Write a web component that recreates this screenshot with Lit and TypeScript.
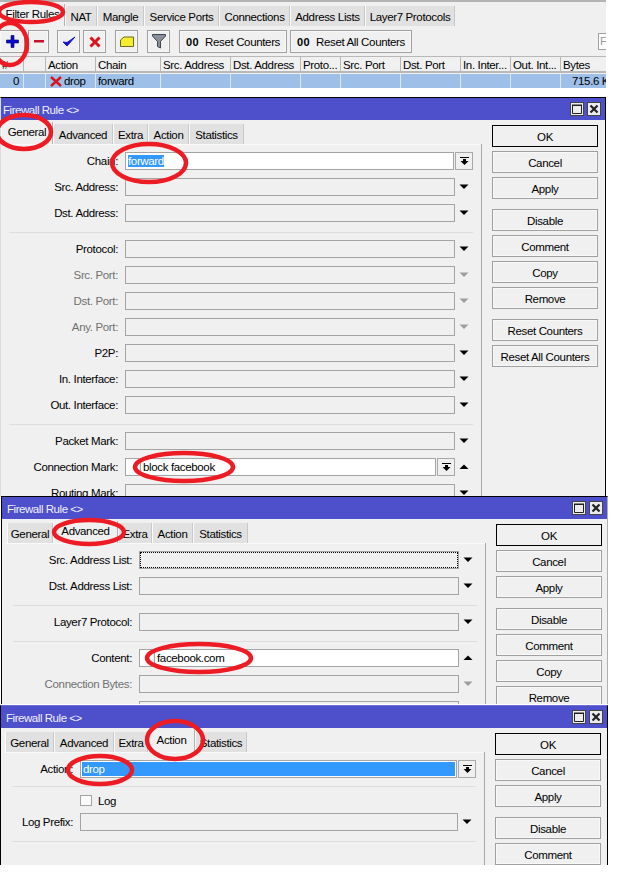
import { LitElement, html, css, svg, nothing } from "lit";
import { customElement } from "lit/decorators.js";

type Row =
  | { sep: true; cls?: string }
  | {
      sep?: false;
      label: string;
      kind?: "white" | "blue" | "plain" | "focus";
      value?: string;
      select?: boolean;
      invert?: boolean;
      drop?: boolean;
      arrow?: "down" | "up" | "dim" | "none";
      dim?: boolean;
    };

const Arrow = (kind: string) =>
  kind === "none"
    ? nothing
    : html`<span class="slot"><svg width="10" height="6" viewBox="0 0 10 6"><path d=${kind === "up" ? "M5 0.5 L9.5 5 H0.5 Z" : "M0.5 0.5 H9.5 L5 5 Z"} fill=${kind === "dim" ? "#9aa09a" : "#000"}/></svg></span>`;

const DropBtn = html`<span class="dropbtn"><svg width="9" height="9" viewBox="0 0 9 9"><path d="M0 0H9V1H0Z M3 2H6V4H8.5L4.5 8L0.5 4H3Z" fill="#000"/></svg></span>`;

const tabsTop = [
  ["Filter Rules", 65], ["NAT", 32], ["Mangle", 47], ["Service Ports", 75],
  ["Connections", 71], ["Address Lists", 75], ["Layer7 Protocols", 90],
] as [string, number][];

const columns = [23, 22, 50, 65, 70, 70, 40, 60, 60, 50, 50, 46];
const heads = ["#", "", "Action", "Chain", "Src. Address", "Dst. Address", "Proto...", "Src. Port", "Dst. Port", "In. Inter...", "Out. Int...", "Bytes"];

const generalRows: Row[] = [
  { label: "Chain:", kind: "white", value: "forward", select: true, drop: true, arrow: "none" },
  { label: "Src. Address:" }, { label: "Dst. Address:" }, { sep: true },
  { label: "Protocol:" },
  { label: "Src. Port:", dim: true, arrow: "dim" },
  { label: "Dst. Port:", dim: true, arrow: "dim" },
  { label: "Any. Port:", dim: true, arrow: "dim" },
  { label: "P2P:" }, { label: "In. Interface:" }, { label: "Out. Interface:" }, { sep: true },
  { label: "Packet Mark:" },
  { label: "Connection Mark:", kind: "white", value: "block facebook", invert: true, drop: true, arrow: "up" },
  { label: "Routing Mark:" },
];
const advancedRows: Row[] = [
  { label: "Src. Address List:", kind: "focus" }, { label: "Dst. Address List:" }, { sep: true },
  { label: "Layer7 Protocol:" }, { sep: true },
  { label: "Content:", kind: "white", value: "facebook.com", invert: true, arrow: "up" },
  { label: "Connection Bytes:", dim: true, arrow: "dim" },
  { label: "", dim: true, arrow: "dim" },
];

const buttonsFull = [["OK", "Cancel", "Apply"], ["Disable", "Comment", "Copy", "Remove"], ["Reset Counters", "Reset All Counters"]];
const buttonsMid = [["OK", "Cancel", "Apply"], ["Disable", "Comment", "Copy", "Remove"]];
const buttonsShort = [["OK", "Cancel", "Apply"], ["Disable", "Comment"]];

@customElement("app-root")
export class AppRoot extends LitElement {
  static styles = css`
    :host { display: block; position: relative; width: 624px; height: 884px; background: #fff; overflow: hidden;
      font: 11.5px "Liberation Sans", Arial, sans-serif; letter-spacing: -0.35px; color: #000; }
    * { box-sizing: border-box; }
    .top { width: 606px; height: 88px; background: #f0f0f0; border-top: 2px solid #b4b4b4; overflow: hidden; }
    .toptabs { display: flex; height: 20px; margin-top: 4px; }
    .tab { height: 20px; padding-top: 1px; background: #e1e1e1; border-left: 1px solid #fafafa; border-right: 1px solid #c8c8c8; display: flex; align-items: center; justify-content: center; white-space: nowrap; flex: none; }
    .tab.active { background: #f0f0f0; border-right-color: #b0b0b0; margin-top: -2px; height: 22px; padding-top: 0; padding-bottom: 2px; }
    .tb { display: flex; height: 23px; margin-top: 4px; }
    .b { height: 23px; flex: none; border: 1px solid #a0a0a0; box-shadow: inset 0 0 0 1px #f8f8f8; background: #f0f0f0; display: flex; align-items: center; justify-content: center; margin-right: 4px; white-space: nowrap; }
    .b b { font-size: 11px; letter-spacing: .4px; margin-right: 6px; }
    .i { width: 23px; }
    .plus { width: 25px; border-left: 0; margin-right: 3px; }
    .minus { width: 21px; margin-right: 8px; }
    .m6 { margin-right: 9px; }
    .m5 { margin-right: 3px; }
    .rc { width: 108px; margin-right: 3px; }
    .rac { width: 122px; }
    .find { margin-left: auto; width: 8px; height: 17px; margin-top: 3px; border: 1px solid #a0a0a0; border-right: 0; background: #fff; color: #999; overflow: hidden; padding-left: 1px; line-height: 15px; }
    .grid { display: grid; margin-top: 3px; }
    .h { height: 17px; border-left: 1px solid #b8b8b8; border-top: 1px solid #b8b8b8; border-bottom: 2px solid #b8b8b8; padding: 0 2px; line-height: 16px; white-space: nowrap; overflow: hidden; }
    .c { height: 14px; margin-top: 1px; background: #9dbfe8; border-left: 1px solid #dce6f2; padding: 0 2px; line-height: 14px; white-space: nowrap; overflow: hidden; }
    .h:first-child, .c.first { border-left: 0; }
    .r { text-align: right; padding-right: 4px; }
    .dropc { display: flex; align-items: center; gap: 2px; padding-left: 4px; }
    .bytes { padding-left: 11px; }

    .dlg { background: #f0f0f0; overflow: hidden; border-top: 1px solid #000; }
    .d1 { width: 606px; height: 400px; margin-top: 9px; border-left: 1px solid #dcdcdc; border-right: 1px solid #000; }
    .d2 { width: 607px; height: 208px; margin-top: -1px; margin-left: 1px; border-left: 1px solid #000; border-right: 1px solid #b0b0b0; position: relative; }
    .d3 { width: 608px; height: 160px; margin-top: 1px; border-left: 1px solid #000; border-right: 1px solid #000; border-top-color: #6e6fd6; }
    .title { height: 22px; background: #4d4fcb; color: #f2f2ff; display: flex; align-items: center; padding-left: 2px; padding-right: 4px; letter-spacing: -0.45px; }
    .d2 .title, .d3 .title { padding-left: 5px; }
    .title span { flex: 1; padding-top: 1px; }
    .tbtn { width: 14px; height: 14px; margin-left: 3px; background: #ececec; border: 1px solid #444; display: flex; align-items: center; justify-content: center; }
    .body { display: flex; height: 100%; }
    .d2 .body, .d3 .body { padding-left: 3px; }
    .left { width: 480px; flex: none; }
    .dtabs { display: flex; height: 24px; padding-top: 4px; }
    .d2 .dtabs { padding-left: 2px; }
    .d3 .dtabs { padding-left: 1px; }
    .form { border-top: 1px solid #fafafa; padding: 7px 8px 0; display: flex; flex-direction: column; gap: 8px; }
    .rule { width: 1px; flex: none; background: #a8a8a8; margin-top: 24px; }
    .btns { width: 106px; margin-left: 10px; flex: none; padding-top: 5px; display: flex; flex-direction: column; gap: 4px; }
    .btns .b { height: 22px; margin: 0; padding-top: 1px; }
    .btns .b.ok { border-color: #000; box-shadow: none; }
    .btns .b.group { margin-top: 6px; }
    .row { display: flex; height: 18px; flex: none; }
    .lab { flex: none; text-align: right; padding-right: 7px; line-height: 18px; white-space: nowrap; }
    .l1 { width: 116px; }
    .l2 { width: 126px; }
    .l3 { width: 68px; }
    .row.dim .lab { color: #707070; }
    .f { flex: 1; min-width: 0; height: 18px; border: 1px solid #a4a4a4; background: #f0f0f0; padding-left: 2px; line-height: 16px; white-space: nowrap; overflow: hidden; }
    .f.white { background: #fff; }
    .f.blue { background: #3399ff; color: #fff; box-shadow: inset 0 0 0 1px #fff; }
    .f.focus { outline: 1px dotted #000; outline-offset: -2px; }
    .sel { background: #3399ff; color: #fff; }
    .inv { width: 14px; height: 18px; flex: none; background: #fff; border: 1px solid #a4a4a4; border-right: 0; margin-right: 1px; }
    .slot { width: 18px; height: 18px; flex: none; display: flex; align-items: center; justify-content: center; }
    .dropbtn { width: 18px; height: 18px; flex: none; margin-left: 1px; border: 1px solid #a8a8a8; background: #f0f0f0; display: flex; align-items: center; justify-content: center; }
    .sep { height: 1px; background: #dedede; margin: 2px 0 -1px; flex: none; }
    .sep.tight { margin: 0; }
    .logrow { display: flex; height: 11px; margin-bottom: -1px; flex: none; align-items: center; padding-left: 68px; }
    .cb { width: 12px; height: 11px; background: #fafafa; border: 1px solid #a4a4a4; margin-right: 6px; }
    .marks { position: absolute; left: 0; top: 0; pointer-events: none; }
  `;

  private dTabs(active: string, widths: number[]) {
    return html`<div class="dtabs">${["General", "Advanced", "Extra", "Action", "Statistics"].map((t, i) =>
      html`<div class="tab ${t === active ? "active" : ""}" style="width:${widths[i]}px">${t}</div>`)}</div>`;
  }

  private row(r: Row, lcls: string) {
    if (r.sep) return html`<div class="sep ${r.cls ?? ""}"></div>`;
    const kind = r.kind ?? "plain";
    return html`<div class="row ${r.dim ? "dim" : ""}">
      <div class="lab ${lcls}">${r.label}</div>
      ${r.invert ? html`<span class="inv"></span>` : nothing}
      <div class="f ${kind}">${r.select ? html`<span class="sel">${r.value}</span>` : r.value ?? ""}</div>
      ${r.drop ? DropBtn : nothing}
      ${Arrow(r.arrow ?? "down")}
    </div>`;
  }

  private buttons(groups: string[][]) {
    return html`<div class="btns">${groups.map((g, gi) => g.map((t, i) =>
      html`<div class="b ${t === "OK" ? "ok" : ""} ${gi > 0 && i === 0 ? "group" : ""}">${t}</div>`))}</div>`;
  }

  private title() {
    return html`<div class="title"><span>Firewall Rule &lt;&gt;</span>
      <div class="tbtn"><svg width="10" height="10" viewBox="0 0 10 10"><path d="M0.5 1.5H9.5V9.5H0.5Z" fill="none" stroke="#222"/><path d="M0 0.5H10V2H0Z" fill="#222"/></svg></div>
      <div class="tbtn"><svg width="10" height="10" viewBox="0 0 10 10"><path d="M1.5 1.5L8.5 8.5M8.5 1.5L1.5 8.5" stroke="#222" stroke-width="2.2"/></svg></div>
    </div>`;
  }

  render() {
    const marks: [number, number, number, number][] = [
      [31, 12, 32, 10], [10, 44, 17, 21], [24, 132, 27, 17], [149, 163, 37, 19],
      [184, 467, 49, 14], [89, 532, 35, 12], [199, 658, 52, 14], [175, 740, 28, 19], [100, 770, 32, 14],
    ];
    return html`
      <div class="top">
        <div class="toptabs">${tabsTop.map(([t, w], i) => html`<div class="tab ${i === 0 ? "active" : ""}" style="width:${w}px">${t}</div>`)}</div>
        <div class="tb">
          <div class="b plus"><svg width="13" height="13" viewBox="0 0 13 13"><path d="M5 0.5H8V5H12.5V8H8V12.5H5V8H0.5V5H5Z" fill="#0b0bd0" stroke="#00006a" stroke-width=".6"/></svg></div>
          <div class="b minus"><svg width="13" height="13" viewBox="0 0 13 13"><path d="M2 5H12V7.5H2Z" fill="#c8102e"/></svg></div>
          <div class="b i m5"><svg width="14" height="12" viewBox="0 0 14 12"><path d="M1 6L5 10L13 1L5 6.5Z" fill="#1414d0" stroke="#1414d0"/></svg></div>
          <div class="b i m6"><svg width="12" height="12" viewBox="0 0 12 12"><path d="M1.5 1.5L10.5 10.5M10.5 1.5L1.5 10.5" stroke="#d8141e" stroke-width="3"/></svg></div>
          <div class="b i m6"><svg width="14" height="12" viewBox="0 0 14 12"><path d="M0.5 4L4 1H13.5V10.5H0.5Z" fill="#f5ee30" stroke="#6a6a20"/></svg></div>
          <div class="b i m6"><svg width="14" height="15" viewBox="0 0 14 15"><path d="M0.5 0.5H13.5V2L8.5 7.5V14L5.5 12.5V7.5L0.5 2Z" fill="#8a9098" stroke="#3c4450"/></svg></div>
          <div class="b rc"><b>00</b>Reset Counters</div>
          <div class="b rac"><b>00</b>Reset All Counters</div>
          <div class="find">F</div>
        </div>
        <div class="grid" style="grid-template-columns:${columns.map((c) => c + "px").join(" ")}">
          ${heads.map((h) => html`<div class="h">${h}</div>`)}
          <div class="c first r">0</div><div class="c"></div>
          <div class="c dropc"><svg width="12" height="11" viewBox="0 0 12 11"><path d="M1 1L11 10M11 1L1 10" stroke="#d8141e" stroke-width="2.4"/></svg>drop</div>
          <div class="c">forward</div>
          ${[0, 1, 2, 3, 4, 5, 6].map(() => html`<div class="c"></div>`)}
          <div class="c bytes">715.6 KiB</div>
        </div>
      </div>

      <div class="dlg d1">${this.title()}
        <div class="body">
          <div class="left">${this.dTabs("General", [52, 60, 35, 41, 55])}
            <div class="form">${generalRows.map((r) => this.row(r, "l1"))}</div>
          </div>
          <div class="rule"></div>
          ${this.buttons(buttonsFull)}
        </div>
      </div>

      <div class="dlg d2">${this.title()}
        <div class="body">
          <div class="left">${this.dTabs("Advanced", [46, 65, 34, 41, 55])}
            <div class="form">${advancedRows.map((r) => this.row(r, "l2"))}</div>
          </div>
          <div class="rule"></div>
          ${this.buttons(buttonsMid)}
        </div>
      </div>

      <div class="dlg d3">${this.title()}
        <div class="body">
          <div class="left">${this.dTabs("Action", [49, 60, 34, 47, 52])}
            <div class="form">
              ${this.row({ label: "Action:", kind: "blue", value: "drop", drop: true, arrow: "none" }, "l3")}
              <div class="sep tight"></div>
              <div class="logrow"><span class="cb"></span>Log</div>
              ${this.row({ label: "Log Prefix:" }, "l3")}
              <div class="sep"></div>
            </div>
          </div>
          <div class="rule"></div>
          ${this.buttons(buttonsShort)}
        </div>
      </div>

      <svg class="marks" width="624" height="884" viewBox="0 0 624 884">
        ${marks.map(([cx, cy, rx, ry]) => svg`<ellipse cx=${cx} cy=${cy} rx=${rx} ry=${ry} fill="none" stroke="#ed1c24" stroke-width="4.5"/>`)}
      </svg>
    `;
  }
}
